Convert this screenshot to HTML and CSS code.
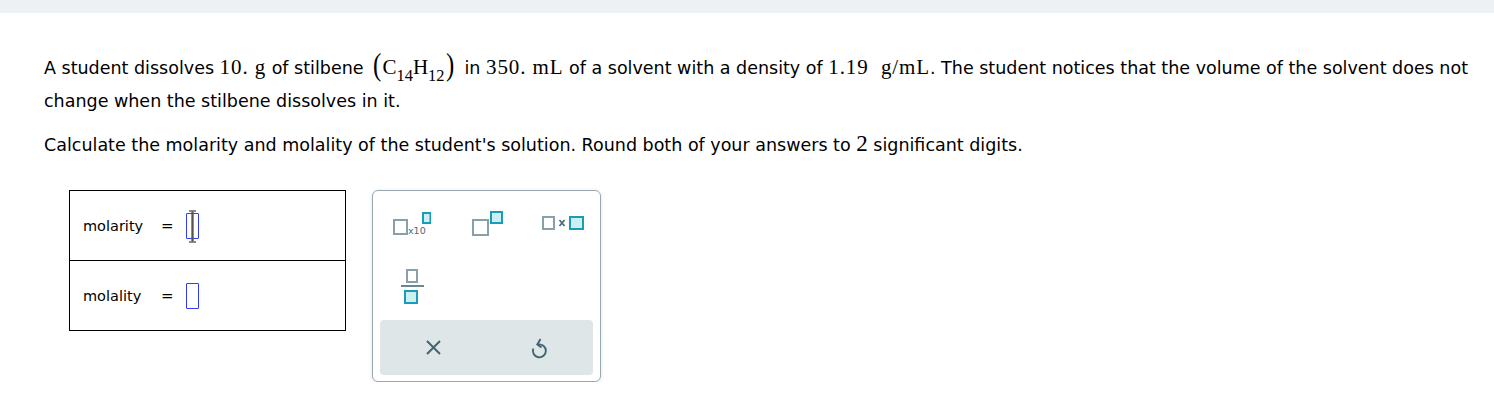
FILE: index.html
```html
<!DOCTYPE html>
<html>
<head>
<meta charset="utf-8">
<link rel="stylesheet" href="styles.css">
</head>
<body>
<div class="topbar"></div>
<main class="content">
  <p class="para p1">A student dissolves <span class="m">10.&nbsp;g</span> of stilbene <span class="m formula"><span class="paren">(</span>C<sub>14</sub>H<sub>12</sub><span class="paren">)</span></span> in <span class="m">350.&nbsp;mL</span> of a solvent with a density of <span class="m">1.19&nbsp;&nbsp;g/mL</span>. The student notices that the volume of the solvent does not change when the stilbene dissolves in it.</p>
  <p class="para p2">Calculate the molarity and molality of the student's solution. Round both of your answers to <span class="m two">2</span> significant digits.</p>
  <div class="work">
    <div class="answers">
      <div class="row">
        <span class="label">molarity</span>
        <span class="eq">=</span>
        <span class="box">
          <svg class="caret" width="9" height="33" viewBox="0 0 9 33"><path d="M1 1 H8 M4.5 1 V32 M1 32 H8" stroke="#666" stroke-width="1.4" fill="none"/><path d="M4.5 2 V31" stroke="#555" stroke-width="2.2"/></svg>
        </span>
      </div>
      <div class="row">
        <span class="label">molality</span>
        <span class="eq">=</span>
        <span class="box"></span>
      </div>
    </div>
    <div class="keypad">
      <div class="keys">
        <button class="key">
          <svg width="38" height="23" viewBox="0 0 38 23"><rect x="1" y="8" width="13" height="14" class="g"/><text x="15" y="22" class="x10">x10</text><rect x="30" y="1" width="7.5" height="10" class="t"/></svg>
        </button>
        <button class="key">
          <svg width="31" height="25" viewBox="0 0 31 25"><rect x="1" y="9" width="15" height="15" class="g"/><rect x="19" y="1" width="11" height="11" class="t"/></svg>
        </button>
        <button class="key">
          <svg width="42" height="14" viewBox="0 0 42 14"><rect x="1" y="1" width="11" height="12" class="g"/><path d="M17.5 4 L22.5 10 M22.5 4 L17.5 10" stroke="#4f6a75" stroke-width="1.8"/><rect x="28" y="1" width="13" height="12" class="t"/></svg>
        </button>
        <button class="key">
          <svg width="23" height="35" viewBox="0 0 23 35"><rect x="6" y="1" width="10" height="12" class="g"/><rect x="0" y="16" width="23" height="2" fill="#6d8791"/><rect x="4" y="22" width="12" height="12" class="t"/></svg>
        </button>
      </div>
      <div class="actions">
        <button class="act">
          <svg width="15" height="15" viewBox="0 0 15 15"><path d="M1 1 L14 14 M14 1 L1 14" stroke="#3f6472" stroke-width="2" fill="none"/></svg>
        </button>
        <button class="act">
          <svg width="17" height="22" viewBox="0 0 17 22"><path d="M7 7.5 A6.5 6.5 0 1 1 2.3 11.5" stroke="#3f6472" stroke-width="1.9" fill="none"/><path d="M9.5 2 L6.3 7.4 L10.5 10.5" stroke="#3f6472" stroke-width="1.9" fill="none"/></svg>
        </button>
      </div>
    </div>
  </div>
</main>
</body>
</html>
```

FILE: styles.css
```css
html, body {
  margin: 0;
  padding: 0;
  background: #ffffff;
}
body {
  font-family: "DejaVu Sans", Verdana, sans-serif;
  font-size: 17.5px;
  color: #000;
}
.topbar {
  height: 13px;
  background: #eef1f3;
}
.content {
  padding: 0 20px 0 44px;
}
.para {
  margin: 0;
  line-height: 33px;
  max-width: 1430px;
}
.p1 {
  margin-top: 38px;
}
.p2 {
  margin-top: 11px;
}
.m {
  font-family: "Liberation Serif", "Times New Roman", serif;
  font-size: 21px;
  letter-spacing: 0.9px;
}
.two {
  font-size: 23px;
  letter-spacing: 0;
  line-height: 0;
}
.formula {
  margin-left: 3px;
  margin-right: 4px;
  letter-spacing: 0;
}
.formula sub {
  font-size: 16.5px;
  vertical-align: -7px;
  line-height: 0;
}
.paren {
  display: inline-block;
  font-size: 31px;
  line-height: 0;
  transform: scaleX(0.8) translateY(1px);
  font-weight: 300;
}
.work {
  display: flex;
  align-items: flex-start;
  gap: 26px;
  margin-top: 28px;
  margin-left: 25px;
}
.answers {
  width: 275px;
  border: 1px solid #000;
}
.row {
  height: 69px;
  display: flex;
  align-items: center;
  padding-left: 13px;
  font-size: 14.5px;
}
.row + .row {
  border-top: 1px solid #000;
}
.label {
  width: 78px;
}
.eq {
  width: 25px;
  font-size: 15px;
}
.box {
  position: relative;
  width: 11px;
  height: 24px;
  border: 1.5px solid #2f3cf5;
  border-radius: 1px;
}
.caret {
  position: absolute;
  left: 1px;
  top: -4px;
}
.keypad {
  box-sizing: border-box;
  width: 229px;
  height: 192px;
  padding: 0 7px 6px 7px;
  border: 1px solid #97a8b0;
  border-radius: 6px;
  box-shadow: 0 1px 4px rgba(0, 0, 0, 0.12);
  display: flex;
  flex-direction: column;
}
.keys {
  display: grid;
  grid-template-columns: 64px 87px 64px;
  grid-template-rows: 64px 63px;
}
.key, .act {
  border: none;
  background: transparent;
  padding: 0;
  margin: 0;
  display: flex;
  align-items: center;
  justify-content: center;
}
.g {
  fill: #ffffff;
  stroke: #8aa0a8;
  stroke-width: 2;
}
.t {
  fill: #cceff4;
  stroke: #1b9cb6;
  stroke-width: 2;
}
.x10 {
  font-family: "DejaVu Sans", sans-serif;
  font-size: 9.5px;
  fill: #4f6a75;
}
.actions {
  margin-top: 2px;
  height: 56px;
  background: #dfe6e8;
  border-radius: 4px;
  display: grid;
  grid-template-columns: 1fr 1fr;
}
```
